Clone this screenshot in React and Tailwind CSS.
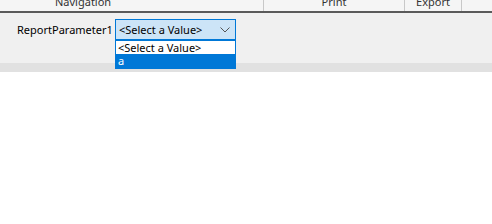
import React from "react";

const Chevron = () => (
  <svg width="10" height="6" viewBox="0 0 10 6" className="block">
    <path d="M0.5 0.5 L5 5 L9.5 0.5" fill="none" stroke="#555" strokeWidth="1" />
  </svg>
);

const App = () => {
  return (
    <div className="relative w-[492px] h-[224px] bg-white text-[11px] text-black font-['Segoe_UI','Noto_Sans',sans-serif]">
      <div className="flex h-[11px] overflow-hidden bg-[#f5f5f5] text-[#333]">
        <div className="w-[264px] shrink-0 border-r border-[#c8c8c8] pl-[55px] leading-[16px] -mt-[6px]">
          Navigation
        </div>
        <div className="w-[141px] shrink-0 border-r border-[#c8c8c8] text-center leading-[16px] -mt-[6px]">
          Print
        </div>
        <div className="w-[57px] shrink-0 border-r border-[#c8c8c8] text-center leading-[16px] -mt-[6px]">
          Export
        </div>
      </div>
      <div className="h-[2px] bg-[#5a5a5a]" />

      <div className="h-[50px] bg-[#f0f0f0] pt-[6px] pl-[17px]">
        <div className="flex items-center">
          <span className="w-[98px] leading-[21px]">ReportParameter1</span>
          <div className="flex items-center justify-between w-[121px] h-[21px] border border-[#0078d7] bg-[#cce4f7] pl-[3px] pr-[5px]">
            <span className="leading-[19px]">&lt;Select a Value&gt;</span>
            <Chevron />
          </div>
        </div>
      </div>
      <div className="h-[9px] bg-[#e1e1e1]" />

      <div className="absolute top-[40px] left-[115px] w-[121px] border border-[#0078d7] bg-white">
        <div className="h-[13px] bg-white pl-[2px] leading-[13px]">
          &lt;Select a Value&gt;
        </div>
        <div className="h-[14px] bg-[#0078d7] text-white pl-[2px] leading-[14px]">
          a
        </div>
      </div>
    </div>
  );
};

export default App;
